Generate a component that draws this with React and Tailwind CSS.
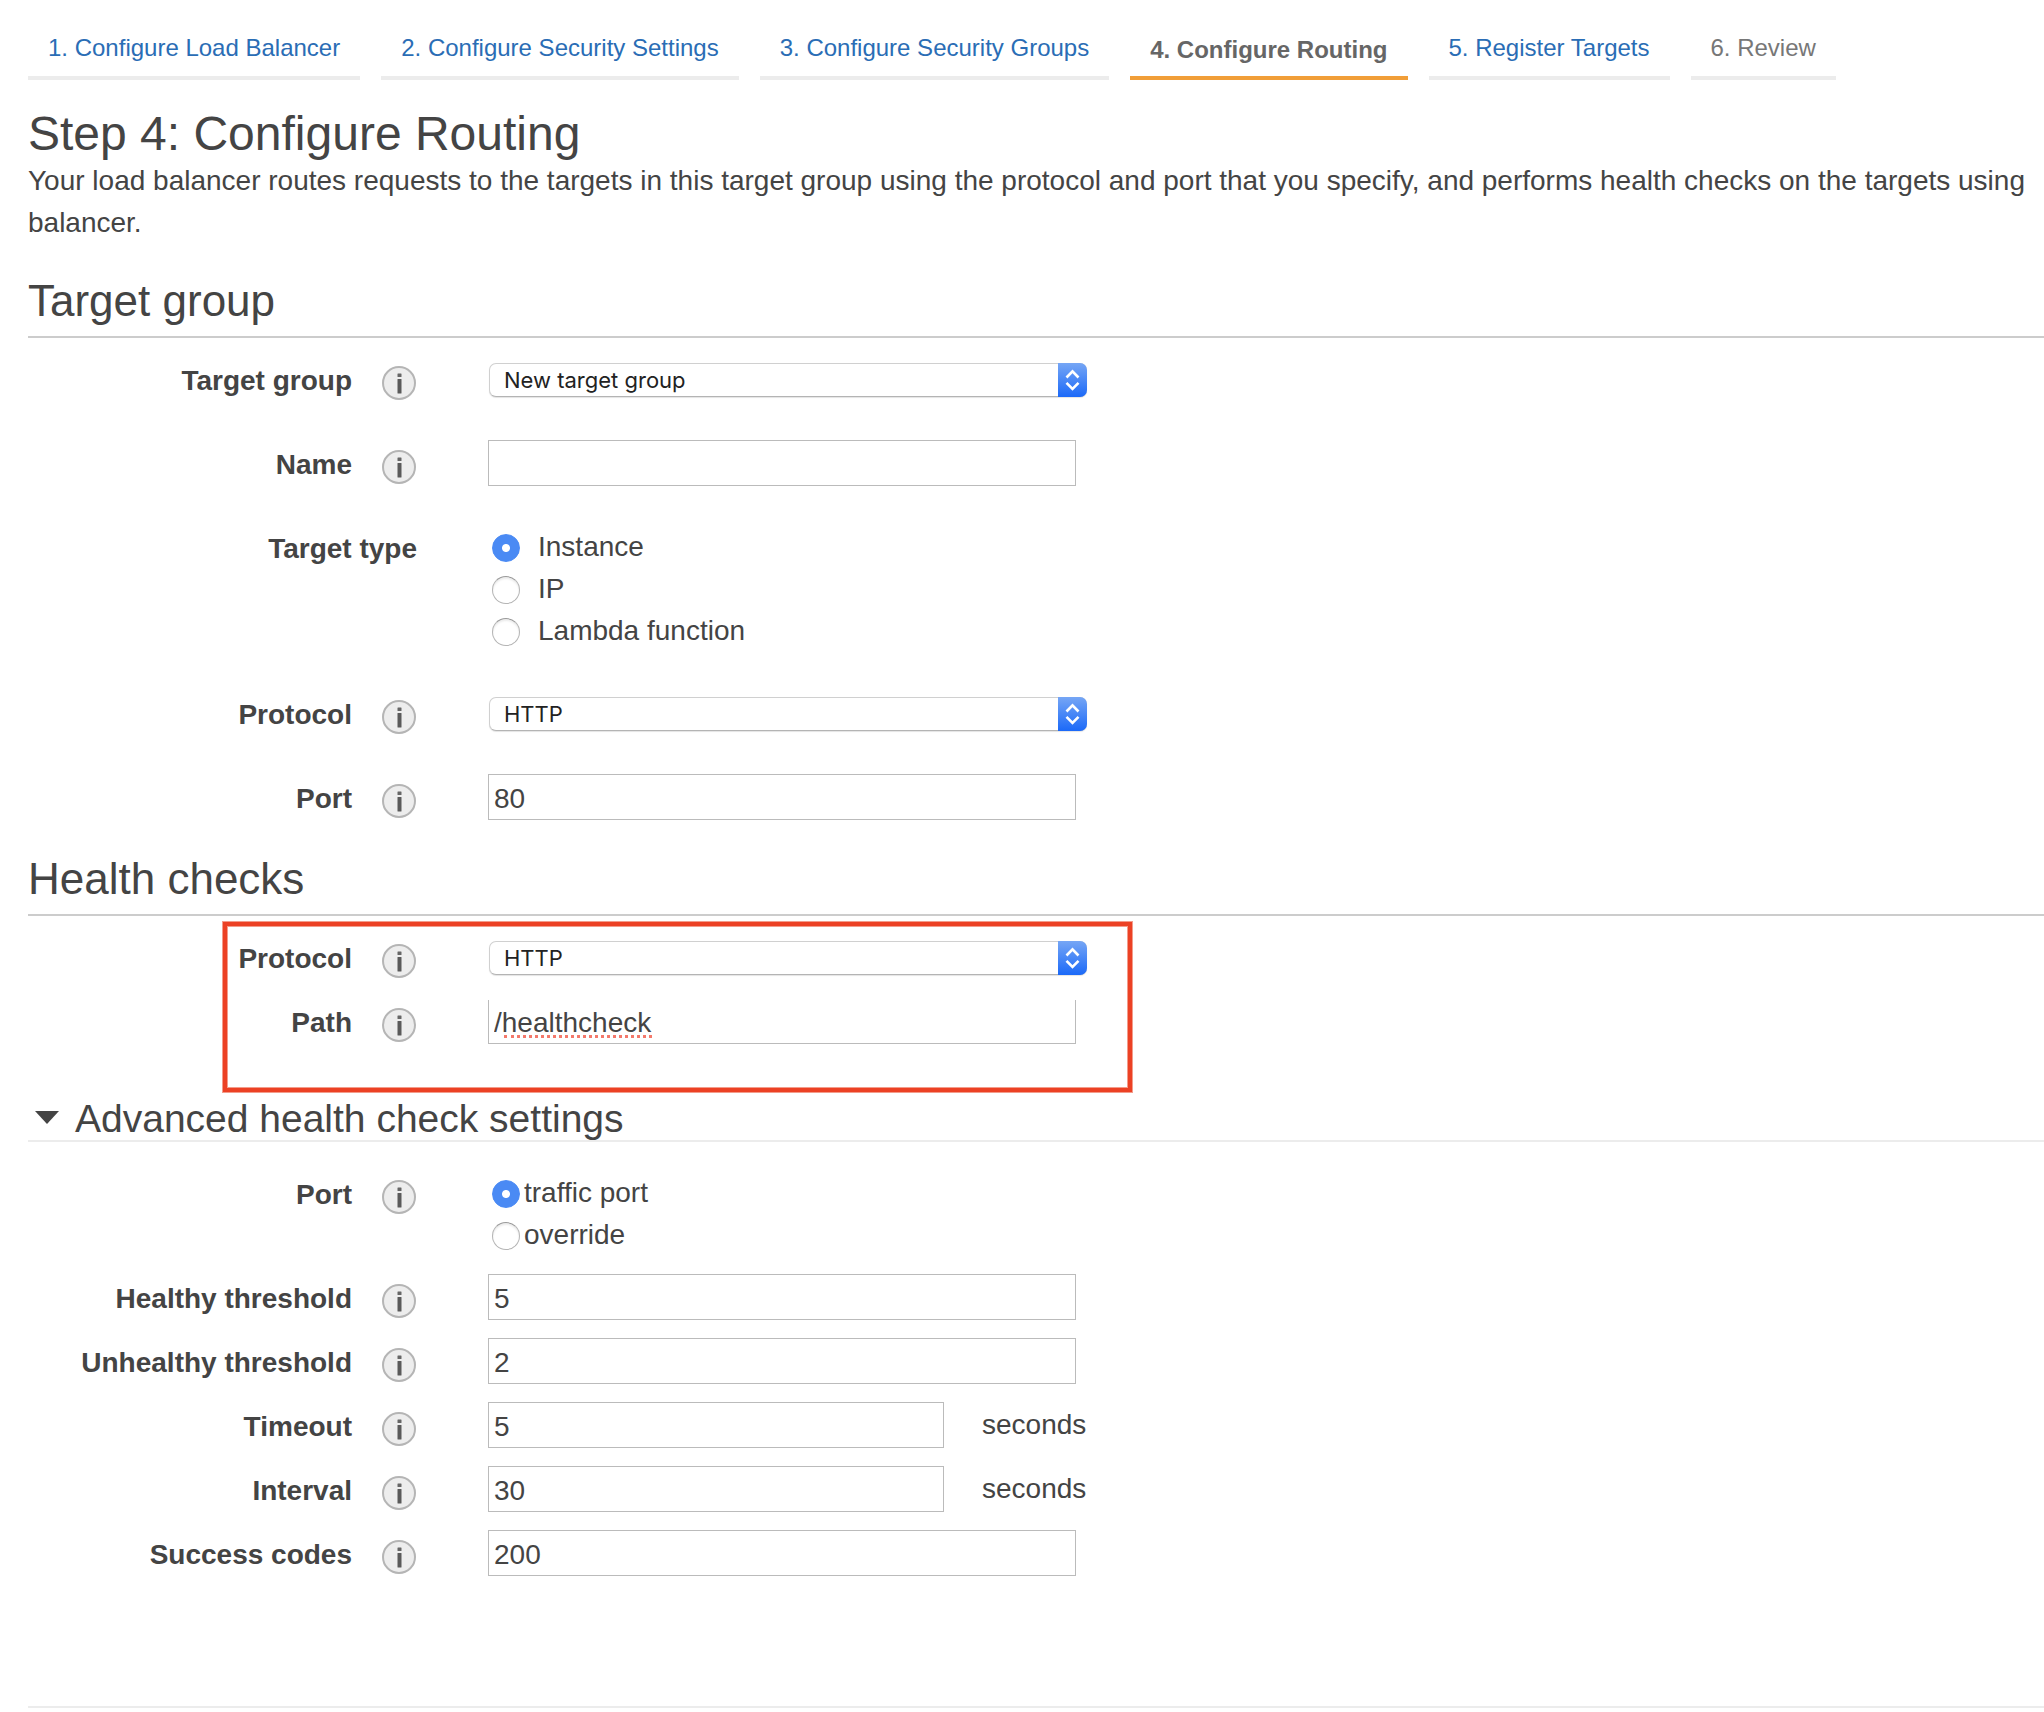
import { useState } from "react";

const steps = [
  { label: "1. Configure Load Balancer", state: "done" },
  { label: "2. Configure Security Settings", state: "done" },
  { label: "3. Configure Security Groups", state: "done" },
  { label: "4. Configure Routing", state: "active" },
  { label: "5. Register Targets", state: "done" },
  { label: "6. Review", state: "disabled" },
];

function StepNav() {
  return (
    <nav className="flex gap-[21px] text-2xl leading-9 whitespace-nowrap">
      {steps.map((step) => {
        if (step.state === "active") {
          return (
            <span key={step.label} aria-current="step" className="px-5 pt-8 pb-2 border-b-4 border-[#f19e38] font-bold text-[#666]">
              {step.label}
            </span>
          );
        }
        if (step.state === "disabled") {
          return (
            <span key={step.label} className="px-5 pt-[30px] pb-2.5 border-b-4 border-[#ececec] text-[#777]">
              {step.label}
            </span>
          );
        }
        return (
          <a key={step.label} href="#" className="px-5 pt-[30px] pb-2.5 border-b-4 border-[#ececec] text-[#2a6db5]">
            {step.label}
          </a>
        );
      })}
    </nav>
  );
}

function InfoButton({ label }) {
  return (
    <button type="button" aria-label={`About ${label}`} className="mt-2.5 ml-[30px] size-[34px] shrink-0">
      <svg viewBox="0 0 34 34" className="size-full">
        <circle cx="17" cy="17" r="16" fill="#ededed" stroke="#b5b5b5" strokeWidth="2" />
        <rect x="15.5" y="7.5" width="4" height="3.5" rx="0.5" fill="#666" />
        <rect x="15.5" y="13" width="4" height="14.5" rx="0.5" fill="#5a5a5a" />
      </svg>
    </button>
  );
}

function Row({ id, label, children }) {
  return (
    <div className="flex items-start">
      <label htmlFor={id} className="mt-1 w-[324px] shrink-0 text-right font-bold">
        {label}
      </label>
      <InfoButton label={label} />
      <div className="ml-[72px]">{children}</div>
    </div>
  );
}

function TextInput({ id, defaultValue }) {
  return (
    <input
      id={id}
      type="text"
      defaultValue={defaultValue}
      className="block h-[46px] w-[588px] border border-[#bbb] bg-white px-[5px] pt-1 outline-none"
    />
  );
}

function SecondsInput({ id, defaultValue }) {
  return (
    <div className="flex items-start">
      <input
        id={id}
        type="text"
        defaultValue={defaultValue}
        className="block h-[46px] w-[456px] border border-[#bbb] bg-white px-[5px] pt-1 outline-none"
      />
      <span className="mt-0.5 ml-[38px]">seconds</span>
    </div>
  );
}

function Select({ id, options }) {
  return (
    <div className="relative ml-px h-[46px] w-[598px] pt-[7px]">
      <select
        id={id}
        className="block h-[34px] w-full appearance-none rounded-[7px] border border-[#d0d0d0] border-b-[#b4b4b4] bg-white pl-[14px] font-[Inter,sans-serif] text-[22px] leading-8 text-[#222] shadow-[0_1px_1px_#e4e4e4] outline-none"
      >
        {options.map((option) => (
          <option key={option}>{option}</option>
        ))}
      </select>
      <svg viewBox="0 0 29 34" className="pointer-events-none absolute top-[7px] right-0 h-[34px] w-[29px]">
        <defs>
          <linearGradient id={`${id}-fill`} x1="0" y1="0" x2="0" y2="1">
            <stop offset="0" stopColor="#76a6f5" />
            <stop offset="1" stopColor="#1b69f8" />
          </linearGradient>
        </defs>
        <path d="M0 0h22a7 7 0 0 1 7 7v20a7 7 0 0 1-7 7H0z" fill={`url(#${id}-fill)`} />
        <path d="M8.5 14.5l6-6.2 6 6.2M8.5 19.8l6 6.2 6-6.2" fill="none" stroke="#fff" strokeWidth="2.6" />
      </svg>
    </div>
  );
}

function Radio({ id, ...props }) {
  return (
    <input
      id={id}
      type="radio"
      className="mt-0.5 ml-1 size-7 shrink-0 appearance-none rounded-full border border-[#b5b5b5] border-t-[#999] bg-white shadow-[inset_0_2px_2px_#ececec] checked:border-[#4a8af4] checked:bg-[radial-gradient(circle,#fff_0_3.5px,#4a8af4_4.5px)] checked:shadow-none"
      {...props}
    />
  );
}

function App() {
  const [targetType, setTargetType] = useState("Instance");
  const [healthPort, setHealthPort] = useState("traffic port");

  return (
    <div className="min-h-screen overflow-x-hidden bg-white pl-7 font-['Liberation_Sans',Arial,sans-serif] text-[28px] leading-[42px] text-[#444]">
      <StepNav />

      <h1 className="mt-[30px] text-5xl leading-12">Step 4: Configure Routing</h1>
      <p className="mt-0.5 whitespace-nowrap">
        Your load balancer routes requests to the targets in this target group using the protocol and port that you specify, and performs health checks on the targets using
        <br />
        balancer.
      </p>

      <form onSubmit={(event) => event.preventDefault()}>
        <section>
          <h2 className="mt-[33px] border-b-2 border-[#ccc] pb-[11px] text-[44px] leading-12">Target group</h2>
          <div className="flex flex-col gap-[38px] pt-[18px]">
            <Row id="target-group" label="Target group">
              <Select id="target-group" options={["New target group", "Existing target group"]} />
            </Row>
            <Row id="name" label="Name">
              <TextInput id="name" />
            </Row>
            <div role="radiogroup" aria-labelledby="target-type" className="flex items-start">
              <span id="target-type" className="mt-1 w-[389px] shrink-0 text-right font-bold">
                Target type
              </span>
              <div className="ml-[71px] pt-0.5">
                {["Instance", "IP", "Lambda function"].map((type) => (
                  <label key={type} className="flex items-center gap-[18px]">
                    <Radio name="target-type" checked={targetType === type} onChange={() => setTargetType(type)} />
                    {type}
                  </label>
                ))}
              </div>
            </div>
            <Row id="protocol" label="Protocol">
              <Select id="protocol" options={["HTTP", "HTTPS"]} />
            </Row>
            <Row id="port" label="Port">
              <TextInput id="port" defaultValue="80" />
            </Row>
          </div>
        </section>

        <section>
          <h2 className="mt-[35px] border-b-2 border-[#ccc] pb-[11px] text-[44px] leading-12">Health checks</h2>
          <div className="relative flex flex-col gap-[18px] pt-[18px]">
            <Row id="health-protocol" label="Protocol">
              <Select id="health-protocol" options={["HTTP", "HTTPS"]} />
            </Row>
            <Row id="path" label="Path">
              <div className="relative pt-0.5">
                <input
                  id="path"
                  type="text"
                  spellCheck={false}
                  defaultValue="/healthcheck"
                  className="block h-11 w-[588px] border border-t-0 border-[#bbb] bg-white px-[5px] pt-0.5 outline-none"
                />
                {/* spelling mark under the word */}
                <span className="pointer-events-none absolute bottom-1.5 left-4 w-[148px] border-b-3 border-dotted border-[#f4796b]" />
              </div>
            </Row>
            <div className="pointer-events-none absolute top-1.5 left-[195px] h-[170px] w-[909px] border-4 border-[#ec4124] shadow-[0_0_0_1px_#f39c8b,inset_0_0_0_1px_#f39c8b]" />
          </div>
        </section>

        <section>
          <h3 className="mt-[54px] border-b-2 border-[#ececec] text-[39px] leading-[42px]">
            <button type="button" aria-expanded="true" className="flex items-center pl-[7px]">
              <svg viewBox="0 0 24 13" className="mb-1 h-[13px] w-6">
                <path d="M0 0h24L12 13z" fill="#444" />
              </svg>
              <span className="ml-4">Advanced health check settings</span>
            </button>
          </h3>
          <div className="flex flex-col gap-[18px] pt-7">
            <Row id="traffic-port" label="Port">
              <div className="pt-0.5">
                {["traffic port", "override"].map((option) => (
                  <label key={option} className="flex items-center gap-1">
                    <Radio
                      id={option === "override" ? "override-port" : "traffic-port"}
                      name="health-port"
                      checked={healthPort === option}
                      onChange={() => setHealthPort(option)}
                    />
                    {option}
                  </label>
                ))}
              </div>
            </Row>
            <Row id="healthy" label="Healthy threshold">
              <TextInput id="healthy" defaultValue="5" />
            </Row>
            <Row id="unhealthy" label="Unhealthy threshold">
              <TextInput id="unhealthy" defaultValue="2" />
            </Row>
            <Row id="timeout" label="Timeout">
              <SecondsInput id="timeout" defaultValue="5" />
            </Row>
            <Row id="interval" label="Interval">
              <SecondsInput id="interval" defaultValue="30" />
            </Row>
            <Row id="success-codes" label="Success codes">
              <TextInput id="success-codes" defaultValue="200" />
            </Row>
          </div>
        </section>
      </form>

      <hr className="mt-[130px] border-t-2 border-[#ececec]" />
    </div>
  );
}

export default App;
